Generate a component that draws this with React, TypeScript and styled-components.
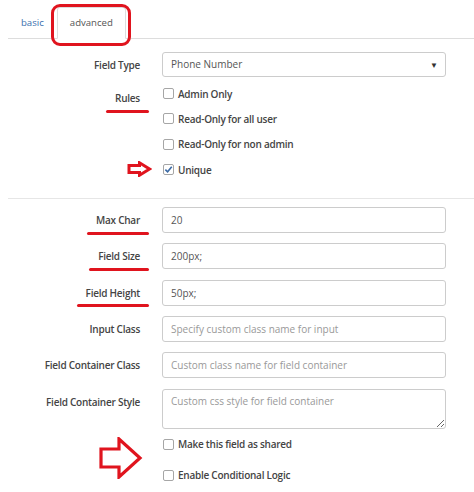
import React from "react";
import styled, { createGlobalStyle, css } from "styled-components";

const GlobalStyle = createGlobalStyle`
  html, body {
    margin: 0;
    padding: 0;
    background: #fff;
  }
  body {
    font-family: "Open Sans", "Noto Sans", "Liberation Sans", sans-serif;
    font-size: 10px;
    color: #444;
  }
  * {
    box-sizing: border-box;
  }
`;

const rules = ["Admin Only", "Read-Only for all user", "Read-Only for non admin", "Unique"];

const textRows = [
  { label: "Max Char", value: "20", marked: true },
  { label: "Field Size", value: "200px;", marked: true },
  { label: "Field Height", value: "50px;", marked: true },
  { label: "Input Class", placeholder: "Specify custom class name for input" },
  { label: "Field Container Class", placeholder: "Custom class name for field container" },
];

function CheckItem({ label, checked }: { label: string; checked?: boolean }) {
  return (
    <Check $h={25.3}>
      <Box>
        {checked && (
          <svg width="9" height="9" viewBox="0 0 10 10">
            <path d="M1.5 5.2 L4 7.6 L8.6 2" fill="none" stroke="#3b6aa5" strokeWidth="1.8" />
          </svg>
        )}
      </Box>
      {label}
    </Check>
  );
}

function SmallArrow() {
  return (
    <svg width="25" height="16" viewBox="0 0 25 16">
      <polygon
        points="2,4.5 12.5,4.5 12.5,1.8 22.5,8 12.5,14.2 12.5,11.5 2,11.5"
        fill="#fff"
        stroke="#e0141e"
        strokeWidth="3"
        strokeLinejoin="miter"
      />
    </svg>
  );
}

function BigArrow() {
  return (
    <svg width="44" height="42" viewBox="0 0 44 42">
      <polygon
        points="2,12 20,12 20,2 41,21 20,40 20,30 2,30"
        fill="none"
        stroke="#e0141e"
        strokeWidth="3.2"
        strokeLinejoin="miter"
      />
    </svg>
  );
}

export default function App() {
  return (
    <Page>
      <GlobalStyle />
      <Tabs>
        <Tab>basic</Tab>
        <Tab $active>
          advanced
          <Highlight />
        </Tab>
      </Tabs>

      <Form>
        <Row $top={13}>
          <Label>
            <LabelText>Field Type</LabelText>
          </Label>
          <Select>
            Phone Number
            <Caret>▼</Caret>
          </Select>
        </Row>

        <Row $top={3}>
          <RulesLabel>
            <Label $pad={4}>
              <LabelText $marked>Rules</LabelText>
            </Label>
            <ArrowSlot>
              <SmallArrow />
            </ArrowSlot>
          </RulesLabel>
          <CheckList>
            {rules.map((r) => (
              <CheckItem key={r} label={r} checked={r === "Unique"} />
            ))}
          </CheckList>
        </Row>

        <Divider />

        {textRows.map((row, i) => (
          <Row key={row.label} $top={i === 0 ? 8 : 10.3}>
            <Label>
              <LabelText $marked={row.marked}>{row.label}</LabelText>
            </Label>
            <Input readOnly defaultValue={row.value} placeholder={row.placeholder} />
          </Row>
        ))}

        <Row $top={10.3}>
          <Label>
            <LabelText>Field Container Style</LabelText>
          </Label>
          <TextArea placeholder="Custom css style for field container" />
        </Row>

        <Row $top={0}>
          <BigArrowSlot>
            <BigArrow />
          </BigArrowSlot>
          <div>
            <Check $h={31}>
              <Box />
              Make this field as shared
            </Check>
            <Check $h={31}>
              <Box />
              Enable Conditional Logic
            </Check>
          </div>
        </Row>
      </Form>
    </Page>
  );
}

const Page = styled.div`
  width: 474px;
  height: 492px;
  padding-left: 8px;
  overflow: hidden;
`;

const Tabs = styled.div`
  display: flex;
  align-items: flex-end;
  height: 39px;
  border-bottom: 1px solid #ddd;
`;

const Tab = styled.div<{ $active?: boolean }>`
  position: relative;
  height: 32px;
  line-height: 30px;
  padding: 0 12px;
  margin-bottom: -1px;
  font-size: 9.6px;
  color: #3a6fae;
  border: 1px solid transparent;
  ${(p) =>
    p.$active &&
    css`
      color: #555;
      background: #fff;
      border-color: #ddd #ddd transparent #ddd;
      border-radius: 3px 3px 0 0;
    `}
`;

const Highlight = styled.span`
  position: absolute;
  left: -7px;
  right: -6px;
  top: -4px;
  height: 42px;
  border: 3px solid #e0141e;
  border-radius: 9px;
`;

const Form = styled.div`
  display: flex;
  flex-direction: column;
`;

const Row = styled.div<{ $top: number }>`
  display: grid;
  grid-template-columns: 132px 284px;
  column-gap: 22px;
  margin-top: ${(p) => p.$top}px;
`;

const Label = styled.div<{ $pad?: number }>`
  text-align: right;
  font-weight: 600;
  letter-spacing: -0.25px;
  color: #444;
  line-height: 26px;
  padding-top: ${(p) => p.$pad ?? 0}px;
`;

const LabelText = styled.span<{ $marked?: boolean }>`
  position: relative;
  display: inline-block;
  ${(p) =>
    p.$marked &&
    css`
      &::after {
        content: "";
        position: absolute;
        left: -9px;
        right: -9px;
        top: calc(100% - 1.5px);
        height: 3px;
        border-radius: 2px;
        background: #e0141e;
      }
    `}
`;

const RulesLabel = styled.div`
  display: flex;
  flex-direction: column;
  justify-content: space-between;
`;

const ArrowSlot = styled.div`
  display: flex;
  justify-content: flex-end;
  margin-right: -12px;
  margin-bottom: 5px;
  line-height: 0;
`;

const BigArrowSlot = styled.div`
  display: flex;
  justify-content: flex-end;
  align-items: center;
  margin-right: -3px;
  margin-top: -3px;
`;

const Select = styled.div`
  position: relative;
  height: 25px;
  line-height: 23px;
  padding-left: 8px;
  border: 1px solid #ccc;
  border-radius: 3px;
  color: #555;
  background: #fff;
`;

const Caret = styled.span`
  position: absolute;
  right: 7px;
  top: 0;
  font-size: 8px;
  color: #333;
`;

const CheckList = styled.div`
  display: flex;
  flex-direction: column;
`;

const Check = styled.label<{ $h: number }>`
  display: flex;
  align-items: center;
  gap: 4px;
  height: ${(p) => p.$h}px;
  padding-left: 1px;
  font-weight: 600;
  letter-spacing: -0.25px;
  color: #444;
`;

const Box = styled.span`
  display: inline-flex;
  align-items: center;
  justify-content: center;
  width: 11px;
  height: 11px;
  border: 1px solid #a6a6a6;
  border-radius: 2px;
  background: #fff;
`;

const Divider = styled.div`
  height: 1px;
  margin-top: 16px;
  background: #e6e6e6;
`;

const fieldStyle = css`
  width: 100%;
  border: 1px solid #ccc;
  border-radius: 3px;
  font-family: inherit;
  font-size: 10px;
  color: #555;
  padding: 0 8px;
  outline: none;
  background: #fff;
  &::placeholder {
    color: #999;
  }
`;

const Input = styled.input`
  ${fieldStyle}
  height: 26px;
`;

const TextArea = styled.textarea`
  ${fieldStyle}
  height: 40px;
  padding-top: 4px;
  resize: vertical;
`;
